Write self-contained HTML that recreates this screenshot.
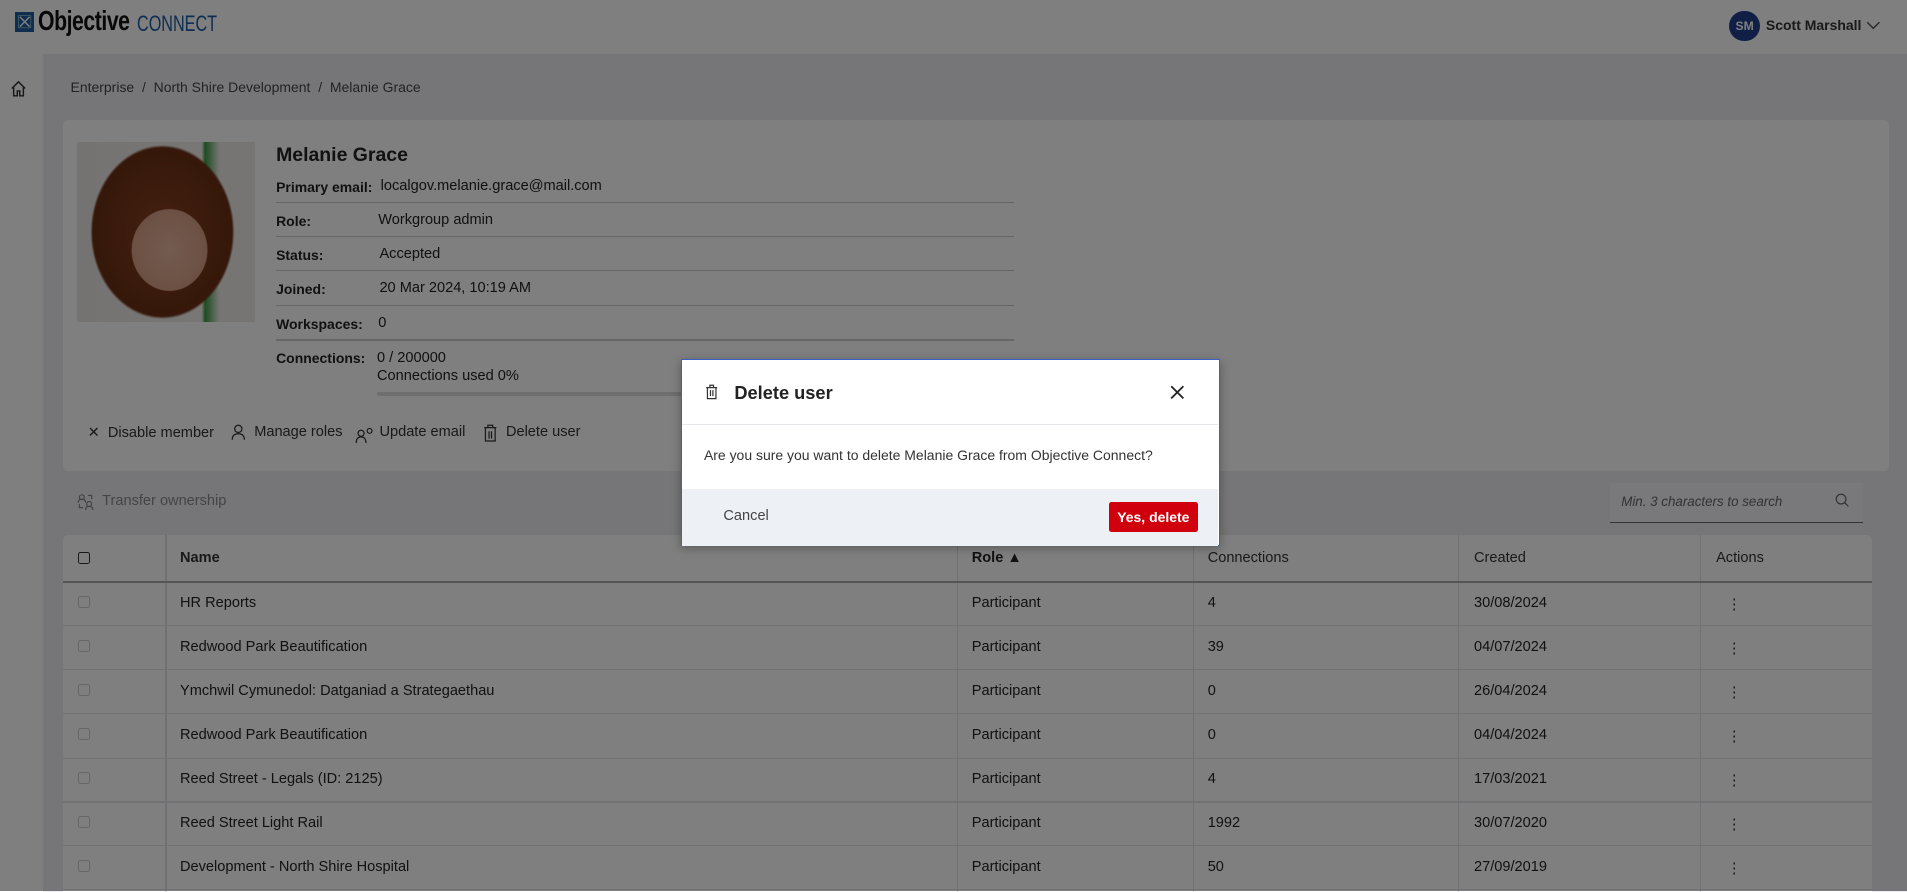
<!DOCTYPE html>
<html><head><meta charset="utf-8"><style>
*{box-sizing:border-box;margin:0;padding:0}
html,body{width:1907px;height:892px;overflow:hidden}
body{font-family:"Liberation Sans",sans-serif;color:#222;background:#ecedf1;position:relative}
#w{zoom:1.21621;width:1568px;height:733px;position:relative}
.top{position:absolute;left:0;top:0;width:1568px;height:44px;background:#fff}
.side{position:absolute;left:0;top:44px;width:35px;height:700px;background:#fff}
.a{position:absolute;white-space:nowrap}
.card{position:absolute;left:52px;top:99px;width:1501px;height:288px;background:#fff;border-radius:4px}
.tbl{position:absolute;left:52px;top:440px;width:1487px;height:300px;background:#fff;border-radius:4px}
.f13{font-size:12px}
.lb{font-size:11.5px;font-weight:bold}
.hr{position:absolute;left:227px;width:607px;height:1px;background:#ccc}
.cb{position:absolute;width:10px;height:10px;border:1px solid #ccc;border-radius:2px;left:12px}
.vl{position:absolute;top:0;width:1px;height:300px;background:#e2e3e6}
.rl{position:absolute;left:0;width:1487px;height:1px;background:#e4e5e8}
.ov{position:absolute;left:0;top:0;width:1568px;height:733px;background:rgba(0,0,0,.5)}
.modal{position:absolute;left:560px;top:295px;width:443px;height:154px;background:#fff;border:1px solid #3f5fc8;box-shadow:0 2px 8px rgba(0,0,0,.3)}
</style></head><body><div id="w">
<div class="top">
 <div class="a" style="left:12px;top:10px;width:16px;height:16px;background:#1e5aa0"><svg width="16" height="16"><path d="M4 4l8 8M12 4l-8 8" stroke="#fff" stroke-width="1.2"/><rect x="3" y="3" width="10" height="10" fill="none" stroke="#9cc" stroke-width=".6"/></svg></div>
 <div class="a" style="left:31px;top:4px;font-size:23px;font-weight:bold;letter-spacing:-.5px;color:#111;transform:scaleX(.76);transform-origin:left">Objective</div>
 <div class="a" style="left:113px;top:9px;font-size:18px;color:#1e5aa0;transform:scaleX(.74);transform-origin:left">CONNECT</div>
 <div class="a" style="left:1422px;top:9px;width:25px;height:25px;border-radius:50%;background:#1f3f8a;color:#fff;font-size:10px;font-weight:bold;text-align:center;line-height:25px">SM</div>
 <div class="a" style="left:1452px;top:14px;font-size:11.5px;font-weight:bold;color:#333">Scott Marshall</div>
 <svg class="a" style="left:1534px;top:17px" width="12" height="8"><path d="M1 1l5 5 5-5" fill="none" stroke="#555" stroke-width="1.2"/></svg>
</div>
<div class="side"><svg class="a" style="left:8px;top:22px" width="14" height="14"><path d="M1.5 7L7 1.5 12.5 7M3 6v7h3v-4h2v4h3V6" fill="none" stroke="#333" stroke-width="1.2"/></svg></div>
<div class="a f13" style="left:58px;top:65px;font-size:11.5px;color:#444">Enterprise &nbsp;/&nbsp; North Shire Development &nbsp;/&nbsp; Melanie Grace</div>
<div class="card">
 <div class="a" style="left:11px;top:18px;width:147px;height:148px;background:radial-gradient(ellipse 30% 32% at 52% 60%,#e8b8a0 0,#d9a088 70%,transparent 72%),radial-gradient(ellipse 46% 55% at 48% 50%,#8a4020 0,#6a3014 85%,transparent 88%),linear-gradient(90deg,#eae6e2,#f2efec 70%,#3a9a40 72%,#eeeae6 80%)"></div>
</div>
<div class="a" style="left:227px;top:118px;font-size:16px;font-weight:bold;color:#222">Melanie Grace</div>
<div class="a lb" style="left:227px;top:147px">Primary email:</div><div class="a f13" style="left:313px;top:146px">localgov.melanie.grace@mail.com</div>
<div class="hr" style="top:166px"></div>
<div class="a lb" style="left:227px;top:175px">Role:</div><div class="a f13" style="left:311px;top:174px">Workgroup admin</div>
<div class="hr" style="top:194px"></div>
<div class="a lb" style="left:227px;top:203px">Status:</div><div class="a f13" style="left:312px;top:202px">Accepted</div>
<div class="hr" style="top:222px"></div>
<div class="a lb" style="left:227px;top:231px">Joined:</div><div class="a f13" style="left:312px;top:230px">20 Mar 2024, 10:19 AM</div>
<div class="hr" style="top:251px"></div>
<div class="a lb" style="left:227px;top:260px">Workspaces:</div><div class="a f13" style="left:311px;top:259px">0</div>
<div class="hr" style="top:279px"></div>
<div class="a lb" style="left:227px;top:288px">Connections:</div><div class="a f13" style="left:310px;top:287px;line-height:15px">0 / 200000<br>Connections used 0%</div>
<div class="a" style="left:310px;top:322px;width:524px;height:4px;border-radius:2px;background:#ddd"></div>
<div class="a f13" style="left:72px;top:349px;color:#333">✕&nbsp; Disable member</div>
<svg class="a" style="left:190px;top:349px" width="12" height="14"><circle cx="6" cy="4" r="3" fill="none" stroke="#333"/><path d="M1 13q0-5 5-5t5 5" fill="none" stroke="#333"/></svg>
<div class="a f13" style="left:209px;top:349px;color:#333">Manage roles</div>
<svg class="a" style="left:292px;top:350px" width="16" height="14"><circle cx="5" cy="6" r="2.5" fill="none" stroke="#333"/><path d="M1 14q0-5 4-5t4 5" fill="none" stroke="#333"/><circle cx="12" cy="4" r="2" fill="none" stroke="#333"/></svg>
<div class="a f13" style="left:312px;top:349px;color:#333">Update email</div>
<svg class="a" style="left:397px;top:349px" width="12" height="15"><path d="M1 3h10M4 3V1h4v2M2 3v11h8V3M5 6v6M7 6v6" fill="none" stroke="#333"/></svg>
<div class="a f13" style="left:416px;top:349px;color:#333">Delete user</div>
<svg class="a" style="left:63px;top:405px" width="14" height="14"><circle cx="4" cy="3.5" r="2" fill="none" stroke="#888"/><path d="M1 8q0-3 3-3t3 3M9 2h3v3M2 9v3h3" fill="none" stroke="#888"/><circle cx="10" cy="9" r="2" fill="none" stroke="#888"/><path d="M7 14q0-3 3-3t3 3" fill="none" stroke="#888"/></svg>
<div class="a f13" style="left:84px;top:405px;color:#888">Transfer ownership</div>
<div class="a" style="left:1324px;top:397px;width:208px;height:33px;background:#f2f3f6;border-bottom:1px solid #666"></div>
<div class="a" style="left:1333px;top:406px;font-size:11px;font-style:italic;color:#666">Min. 3 characters to search</div>
<svg class="a" style="left:1509px;top:405px" width="12" height="12"><circle cx="5" cy="5" r="4" fill="none" stroke="#666"/><path d="M8 8l3 3" stroke="#666"/></svg>
<div class="tbl">
 <div class="vl" style="left:84px"></div><div class="vl" style="left:735px"></div><div class="vl" style="left:929px"></div><div class="vl" style="left:1147px"></div><div class="vl" style="left:1346px"></div>
 <div class="rl" style="top:38px;background:#aaa"></div>
 <div class="rl" style="top:74px"></div><div class="rl" style="top:110px"></div><div class="rl" style="top:146px"></div><div class="rl" style="top:183px"></div><div class="rl" style="top:219px"></div><div class="rl" style="top:255px"></div><div class="rl" style="top:291px"></div>
 <div class="cb" style="top:14px;border-color:#333"></div>
 <div class="a f13" style="left:96px;top:12px;font-weight:bold;color:#333">Name</div>
 <div class="a f13" style="left:747px;top:12px;font-weight:bold;color:#222">Role ▲</div>
 <div class="a f13" style="left:941px;top:12px;color:#333">Connections</div>
 <div class="a f13" style="left:1160px;top:12px;color:#333">Created</div>
 <div class="a f13" style="left:1359px;top:12px;color:#333">Actions</div>
</div>
<div id="rows"></div>
<script>
var d=[["HR Reports","4","30/08/2024"],["Redwood Park Beautification","39","04/07/2024"],["Ymchwil Cymunedol: Datganiad a Strategaethau","0","26/04/2024"],["Redwood Park Beautification","0","04/04/2024"],["Reed Street - Legals (ID: 2125)","4","17/03/2021"],["Reed Street Light Rail","1992","30/07/2020"],["Development - North Shire Hospital","50","27/09/2019"]];
var h="";d.forEach(function(r,i){var y=489+i*36.2;
h+='<div class="cb" style="left:64px;top:'+(y+1)+'px"></div><div class="a f13" style="left:148px;top:'+y+'px">'+r[0]+'</div><div class="a f13" style="left:799px;top:'+y+'px">Participant</div><div class="a f13" style="left:993px;top:'+y+'px">'+r[1]+'</div><div class="a f13" style="left:1212px;top:'+y+'px">'+r[2]+'</div><div class="a" style="left:1420px;top:'+(y+1)+'px;font-size:12px;color:#333">⋮</div>';});
document.getElementById("rows").innerHTML=h;
</script>
<div class="ov"></div>
<div class="modal">
 <svg class="a" style="left:19px;top:20px" width="11" height="13"><path d="M1 3h9M4 3V1h3v2M2 3v9h7V3M4.5 5v5M6.5 5v5" fill="none" stroke="#333"/></svg>
 <div class="a" style="left:43px;top:18px;font-size:15px;font-weight:bold;color:#222">Delete user</div>
 <svg class="a" style="left:401px;top:21px" width="12" height="12"><path d="M1 1l10 10M11 1L1 11" stroke="#222" stroke-width="1.5"/></svg>
 <div class="a" style="left:0;top:53px;width:441px;height:1px;background:#e6e8ee"></div>
 <div class="a f13" style="left:18px;top:72px;font-size:11.5px;color:#333">Are you sure you want to delete Melanie Grace from Objective Connect?</div>
 <div class="a" style="left:0;top:106px;width:441px;height:47px;background:#edf0f4"></div>
 <div class="a f13" style="left:34px;top:122px;color:#444">Cancel</div>
 <div class="a" style="left:351px;top:117px;width:73px;height:25px;background:#d0000c;border-radius:2px;color:#fff;font-size:11.5px;font-weight:bold;text-align:center;line-height:25px">Yes, delete</div>
</div>
</div></body></html>
